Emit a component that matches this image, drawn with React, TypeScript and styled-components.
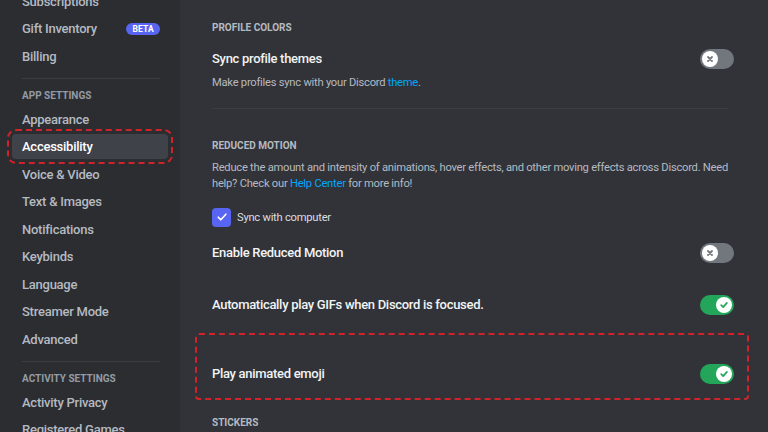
import React from "react";
import styled, { createGlobalStyle } from "styled-components";

const GlobalStyle = createGlobalStyle`
  html, body {
    margin: 0;
    padding: 0;
    background: #313338;
  }
  body {
    font-family: Roboto, "Liberation Sans", sans-serif;
    -webkit-font-smoothing: antialiased;
  }
`;

type NavEntry =
  | { kind: "item"; label: string; active?: boolean; badge?: string }
  | { kind: "header"; label: string }
  | { kind: "divider" };

const nav: NavEntry[] = [
  { kind: "item", label: "Subscriptions" },
  { kind: "item", label: "Gift Inventory", badge: "BETA" },
  { kind: "item", label: "Billing" },
  { kind: "divider" },
  { kind: "header", label: "App Settings" },
  { kind: "item", label: "Appearance" },
  { kind: "item", label: "Accessibility", active: true },
  { kind: "item", label: "Voice & Video" },
  { kind: "item", label: "Text & Images" },
  { kind: "item", label: "Notifications" },
  { kind: "item", label: "Keybinds" },
  { kind: "item", label: "Language" },
  { kind: "item", label: "Streamer Mode" },
  { kind: "item", label: "Advanced" },
  { kind: "divider" },
  { kind: "header", label: "Activity Settings" },
  { kind: "item", label: "Activity Privacy" },
  { kind: "item", label: "Registered Games" },
];

function Toggle({ on }: { on: boolean }) {
  return (
    <Track $on={on}>
      <Knob>
        {on ? (
          <svg width="10" height="10" viewBox="0 0 10 10">
            <path d="M2.2 5.2 L4.2 7.1 L7.9 2.9" fill="none" stroke="#23a55a" strokeWidth="1.7" strokeLinecap="round" strokeLinejoin="round" />
          </svg>
        ) : (
          <svg width="10" height="10" viewBox="0 0 10 10">
            <path d="M3 3 L7 7 M7 3 L3 7" fill="none" stroke="#72767d" strokeWidth="1.8" strokeLinecap="round" />
          </svg>
        )}
      </Knob>
    </Track>
  );
}

export default function App() {
  return (
    <>
      <GlobalStyle />
      <Layout>
        <Sidebar>
          <NavList>
            {nav.map((entry, i) => {
              if (entry.kind === "divider") return <NavDivider key={i} />;
              if (entry.kind === "header") return <NavHeader key={i}>{entry.label}</NavHeader>;
              return (
                <NavItem key={i} $active={!!entry.active}>
                  {entry.label}
                  {entry.badge && <Badge>{entry.badge}</Badge>}
                </NavItem>
              );
            })}
          </NavList>
        </Sidebar>

        <Main>
          <SectionTitle $top={0}>Profile Colors</SectionTitle>
          <SettingRow $top={13}>
            <RowLabel>Sync profile themes</RowLabel>
            <Toggle on={false} />
          </SettingRow>
          <Description $top={6}>
            Make profiles sync with your Discord <Link>theme</Link>.
          </Description>

          <Divider />

          <SectionTitle $top={29}>Reduced Motion</SectionTitle>
          <Description $top={6}>
            Reduce the amount and intensity of animations, hover effects, and other moving effects across Discord. Need
            <br />
            help? Check our <Link>Help Center</Link> for more info!
          </Description>
          <CheckRow>
            <CheckBox>
              <svg width="14" height="14" viewBox="0 0 14 14">
                <path d="M3.2 7.2 L5.9 9.8 L10.9 4.2" fill="none" stroke="#fff" strokeWidth="1.6" strokeLinecap="round" strokeLinejoin="round" />
              </svg>
            </CheckBox>
            <CheckLabel>Sync with computer</CheckLabel>
          </CheckRow>

          <SettingRow $top={16}>
            <RowLabel>Enable Reduced Motion</RowLabel>
            <Toggle on={false} />
          </SettingRow>

          <SettingRow $top={32}>
            <RowLabel>Automatically play GIFs when Discord is focused.</RowLabel>
            <Toggle on />
          </SettingRow>

          <Highlight>
            <SettingRow $top={0}>
              <RowLabel>Play animated emoji</RowLabel>
              <Toggle on />
            </SettingRow>
          </Highlight>

          <SectionTitle $top={15}>Stickers</SectionTitle>
        </Main>
      </Layout>
    </>
  );
}

const Layout = styled.div`
  display: flex;
  width: 768px;
  height: 432px;
  overflow: hidden;
`;

const Sidebar = styled.nav`
  flex: 0 0 180px;
  background: #2b2d31;
  padding: 0 12px;
  box-sizing: border-box;
  overflow: hidden;
`;

const NavList = styled.div`
  display: flex;
  flex-direction: column;
  margin-top: -11.75px;
`;

const NavItem = styled.div<{ $active: boolean }>`
  display: flex;
  align-items: center;
  height: 25.5px;
  margin-bottom: 2px;
  padding: 0 10px;
  border-radius: 4px;
  font-size: 13px;
  font-weight: 500;
  letter-spacing: -0.25px;
  color: ${p => (p.$active ? "#ffffff" : "#b5bac1")};
  background: ${p => (p.$active ? "#404249" : "transparent")};
  white-space: nowrap;
  ${p => p.$active && "outline: 2px dashed #d3222a; outline-offset: 3px;"}
`;

const Badge = styled.span`
  margin-left: auto;
  margin-right: -2px;
  height: 12px;
  padding: 0 6px;
  border-radius: 6px;
  background: #5865f2;
  color: #fff;
  font-size: 8.5px;
  font-weight: 700;
  line-height: 12px;
  letter-spacing: 0.02em;
`;

const NavDivider = styled.div`
  height: 1px;
  margin: 7px 8px 0 10px;
  background: #3b3d43;
`;

const NavHeader = styled.div`
  margin-top: 8px;
  margin-bottom: 2.5px;
  padding: 0 10px;
  height: 17px;
  line-height: 17px;
  font-size: 10px;
  font-weight: 700;
  text-transform: uppercase;
  color: #949ba4;
`;

const Main = styled.main`
  flex: 1;
  display: flex;
  flex-direction: column;
  background: #313338;
  padding: 20px 34px 0 32px;
  min-width: 0;
`;

const SectionTitle = styled.h2<{ $top: number }>`
  margin: ${p => p.$top}px 0 0;
  height: 16px;
  line-height: 16px;
  font-size: 10px;
  font-weight: 700;
  text-transform: uppercase;
  color: #b5bac1;
`;

const SettingRow = styled.div<{ $top: number }>`
  display: flex;
  align-items: center;
  justify-content: space-between;
  height: 20px;
  margin-top: ${p => p.$top}px;
`;

const RowLabel = styled.span`
  font-size: 13px;
  font-weight: 500;
  letter-spacing: -0.3px;
  line-height: 20px;
  color: #f2f3f5;
`;

const Description = styled.p<{ $top: number }>`
  margin: ${p => p.$top}px 0 0;
  font-size: 11.2px;
  letter-spacing: -0.25px;
  line-height: 16px;
  white-space: nowrap;
  color: #b5bac1;
`;

const Link = styled.span`
  color: #00a8fc;
`;

const Divider = styled.div`
  height: 1px;
  margin-top: 17px;
  margin-right: 6px;
  background: #3b3d43;
`;

const CheckRow = styled.div`
  display: flex;
  align-items: center;
  gap: 6px;
  margin-top: 15px;
  height: 20px;
`;

const CheckBox = styled.span`
  display: flex;
  align-items: center;
  justify-content: center;
  width: 19px;
  height: 19px;
  border-radius: 4px;
  background: #5865f2;
`;

const CheckLabel = styled.span`
  font-size: 11.2px;
  letter-spacing: -0.25px;
  color: #dbdee1;
`;

const Track = styled.span<{ $on: boolean }>`
  display: flex;
  align-items: center;
  justify-content: ${p => (p.$on ? "flex-end" : "flex-start")};
  width: 34px;
  height: 20px;
  padding: 0 2px;
  box-sizing: border-box;
  border-radius: 10px;
  background: ${p => (p.$on ? "#23a55a" : "#72767d")};
  flex-shrink: 0;
`;

const Knob = styled.span`
  display: flex;
  align-items: center;
  justify-content: center;
  width: 16px;
  height: 16px;
  border-radius: 50%;
  background: #ffffff;
`;

const Highlight = styled.div`
  margin: 18px -15px 0 -17px;
  padding: 29px 13px 14px 15px;
  border: 2px dashed #d3222a;
  border-radius: 4px;
`;
